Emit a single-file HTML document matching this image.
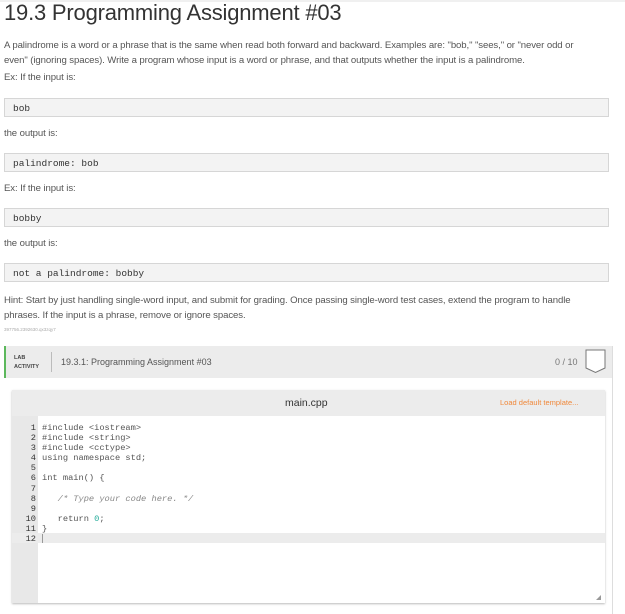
<!DOCTYPE html>
<html><head><style>
body{margin:0;width:625px;height:614px;overflow:hidden;background:#fff;font-family:"Liberation Sans",sans-serif;color:#444;position:relative}
.a{position:absolute}
h1{position:absolute;left:4px;top:0;margin:0;font-weight:normal;font-size:22px;color:#333;letter-spacing:-0.2px}
.p{font-size:9.6px;color:#555;left:4px;line-height:15px;letter-spacing:-0.1px}
.box{left:4px;width:605px;height:19px;background:#f3f3f3;border:1px solid #d6d6d6;font-family:"Liberation Mono",monospace;font-size:9.5px;color:#333;line-height:19px;padding-left:8px;box-sizing:border-box}
.code{font-family:"Liberation Mono",monospace;font-size:8.7px;line-height:10.1px;color:#555}
</style></head><body>
<div style="position:absolute;left:0;top:0;width:625px;height:2px;background:#f0f0f0"></div>
<h1>19.3 Programming Assignment #03</h1>
<div class="a p" style="top:38px;width:598px">A palindrome is a word or a phrase that is the same when read both forward and backward. Examples are: "bob," "sees," or "never odd or<br>even" (ignoring spaces). Write a program whose input is a word or phrase, and that outputs whether the input is a palindrome.</div>
<div class="a p" style="top:70px">Ex: If the input is:</div>
<div class="a box" style="top:98px">bob</div>
<div class="a p" style="top:126px">the output is:</div>
<div class="a box" style="top:153px">palindrome: bob</div>
<div class="a p" style="top:181px">Ex: If the input is:</div>
<div class="a box" style="top:208px">bobby</div>
<div class="a p" style="top:236px">the output is:</div>
<div class="a box" style="top:263px">not a palindrome: bobby</div>
<div class="a p" style="top:293px;width:600px">Hint: Start by just handling single-word input, and submit for grading. Once passing single-word test cases, extend the program to handle phrases. If the input is a phrase, remove or ignore spaces.</div>
<div class="a" style="left:4px;top:327px;font-size:4.5px;color:#aaa">397756.2392630.qx3zqy7</div>

<div class="a" style="left:4px;top:346px;width:608px;height:268px;background:#fff;border-right:1px solid #ddd"></div>
<div class="a" style="left:4px;top:346px;width:608px;height:32px;background:#ececec;border-left:2px solid #5cb85c;box-sizing:border-box"></div>
<div class="a" style="left:14px;top:354px;font-size:5.5px;line-height:9px;color:#444;font-weight:bold">LAB<br>ACTIVITY</div>
<div class="a" style="left:51px;top:352px;width:1px;height:20px;background:#bbb"></div>
<div class="a" style="left:61px;top:357px;font-size:9px;color:#555">19.3.1: Programming Assignment #03</div>
<div class="a" style="left:555px;top:357px;font-size:9px;color:#777">0 / 10</div>
<svg class="a" style="left:585px;top:349px" width="22" height="25"><path d="M1 1H20V19L10.5 23.5L1 19Z" fill="#fff" stroke="#777" stroke-width="1"/></svg>

<div class="a" style="left:12px;top:390px;width:593px;height:213px;background:#fff;box-shadow:0 1px 2px #bbb"></div>
<div class="a" style="left:12px;top:390px;width:593px;height:26px;background:#ececec"></div>
<div class="a" style="left:285px;top:397px;font-size:10.5px;color:#333">main.cpp</div>
<div class="a" style="left:500px;top:398px;font-size:7.5px;color:#f0883a">Load default template...</div>
<div class="a" style="left:12px;top:416px;width:26px;height:187px;background:#e8e8e8"></div>
<div class="a" style="left:12px;top:533px;width:593px;height:10px;background:#ececec"></div>
<div class="a" style="left:42px;top:534px;width:1px;height:9px;background:#999"></div>
<div class="a code" style="left:14px;top:423px;width:22px;text-align:right;color:#333">1<br>2<br>3<br>4<br>5<br>6<br>7<br>8<br>9<br>10<br>11<br>12</div>
<div class="a code" style="left:42px;top:423px;white-space:pre">#include &lt;iostream&gt;
#include &lt;string&gt;
#include &lt;cctype&gt;
using namespace std;

int main() {

   <i style="color:#888">/* Type your code here. */</i>

   return <span style="color:#2a9">0</span>;
}
</div>
<svg class="a" style="left:596px;top:595px" width="5" height="5"><path d="M5 0L0 5H5Z" fill="#999"/></svg>
</body></html>
